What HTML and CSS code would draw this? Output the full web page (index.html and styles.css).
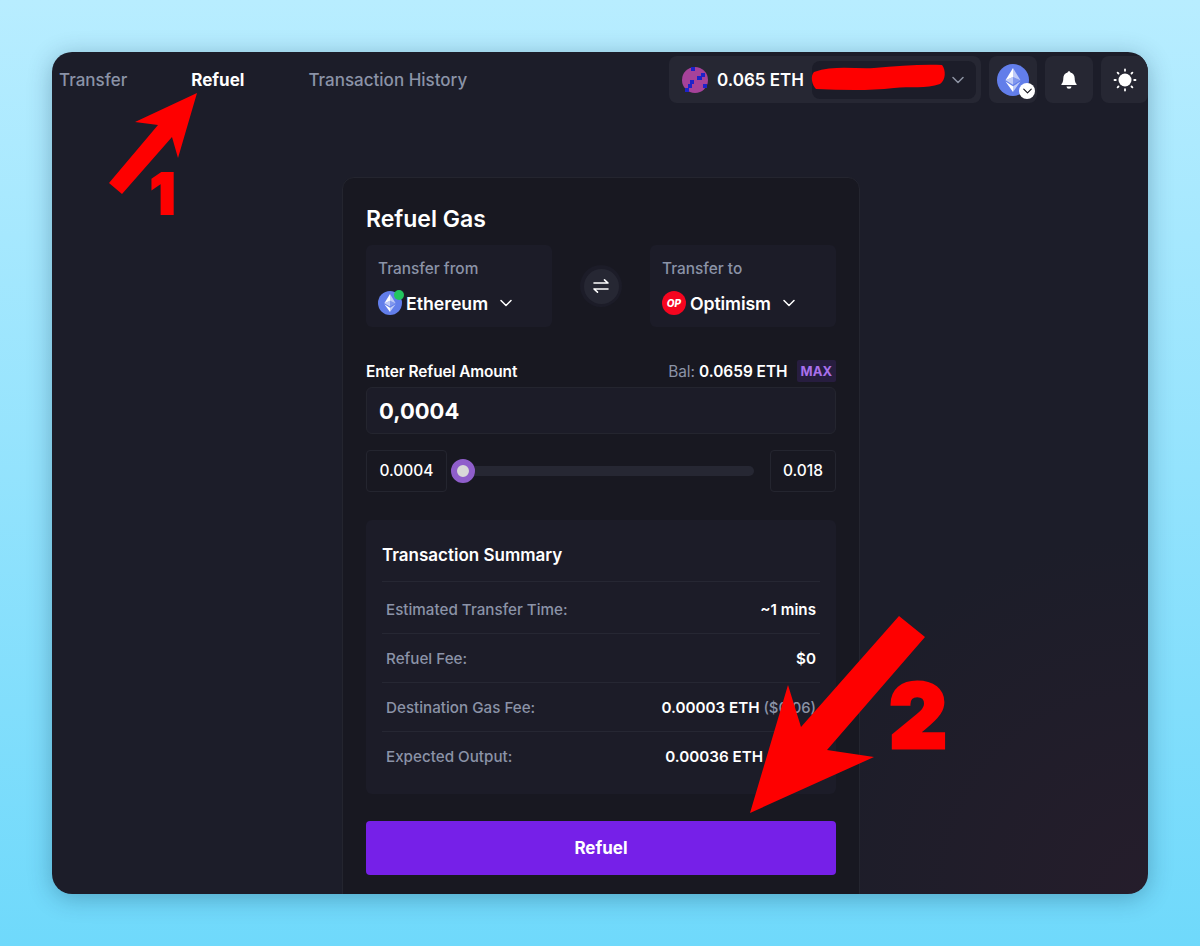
FILE: index.html
```html
<!DOCTYPE html>
<html lang="en">
<head>
    <meta charset="UTF-8">
    <meta name="viewport" content="width=device-width, initial-scale=1.0">
    <title>Refuel Gas</title>
    <link rel="stylesheet" href="styles.css">
</head>
<body>
    <svg class="defs" width="0" height="0">
        <symbol id="eth" viewBox="0 0 32 32">
            <circle cx="16" cy="16" r="16" fill="#627eea"/>
            <path d="M16 4v9l7.5 3.3z" fill="#fff" fill-opacity=".6"/>
            <path d="M16 4L8.5 16.3 16 13z" fill="#fff"/>
            <path d="M16 22.2V28l7.5-10.4z" fill="#fff" fill-opacity=".6"/>
            <path d="M16 28v-5.800L8.500 17.600z" fill="#fff"/>
            <path d="M16 20.800l7.500-4.500L16 13z" fill="#fff" fill-opacity=".2"/>
            <path d="M8.500 16.300l7.500 4.500V13z" fill="#fff" fill-opacity=".6"/>
        </symbol>
        <symbol id="chev" viewBox="0 0 12 8">
            <path d="M1 1.500l5 5 5-5" fill="none" stroke="currentColor" stroke-width="1.500" stroke-linecap="round" stroke-linejoin="round"/>
        </symbol>
    </svg>

    <div class="frame">
        <div class="topbar">
            <div class="nav">
                <a href="#">Transfer</a>
                <a href="#" class="active">Refuel</a>
                <a href="#">Transaction History</a>
            </div>
            <div class="top-right">
                <div class="wallet">
                    <svg class="avatar" width="26" height="26" viewBox="0 0 26 26">
                        <circle cx="13" cy="13" r="13" fill="#a6429a"/>
                        <path d="M9 0h4v4H9zM15 9h5v4h-5zM19 6h4v4h-4zM8 13h4v4H8zM6 17h4v4H6zM3 21h4v4H3zM21 17h4v4h-4z" fill="#1d22c9"/>
                    </svg>
                    <span class="wallet-bal">0.065 ETH</span>
                    <div class="wallet-addr">
                        <svg class="chev-sm" width="12" height="8"><use href="#chev"/></svg>
                    </div>
                </div>
                <div class="icon-btn">
                    <svg width="32" height="32"><use href="#eth"/></svg>
                    <span class="badge"><svg width="9" height="6"><use href="#chev"/></svg></span>
                </div>
                <div class="icon-btn">
                    <svg width="20" height="20" viewBox="0 0 20 20" fill="#fff">
                        <path d="M10 1.200c.8 0 1.400.6 1.400 1.300 2.700.6 4.300 2.900 4.300 5.700 0 2.600.5 4.300 1.800 5.900.3.400.1 1-.4 1H2.900c-.5 0-.7-.6-.4-1 1.300-1.600 1.800-3.300 1.800-5.900 0-2.800 1.600-5.100 4.300-5.700 0-.7.600-1.300 1.400-1.300z"/>
                        <path d="M7.500 16.500h5a2.500 2.300 0 0 1-5 0z"/>
                    </svg>
                </div>
                <div class="icon-btn last-btn">
                    <svg width="24" height="24" viewBox="0 0 24 24" fill="#fff">
                        <circle cx="12" cy="12" r="6.500"/>
                        <g stroke="#fff" stroke-width="1.800" stroke-linecap="round">
                            <path d="M12 1.500v1.300M12 21.200v1.300M1.500 12h1.300M21.200 12h1.300M4.600 4.600l.9.900M18.500 18.500l.9.900M4.600 19.400l.9-.9M18.500 5.500l.9-.9"/>
                        </g>
                    </svg>
                </div>
            </div>
        </div>

        <div class="card">
            <h1>Refuel Gas</h1>

            <div class="chains">
                <div class="chain-box">
                    <div class="chain-label">Transfer from</div>
                    <div class="chain-value">
                        <span class="chain-icon">
                            <svg width="24" height="24"><use href="#eth"/></svg>
                            <i class="online"></i>
                        </span>
                        <span>Ethereum</span>
                        <svg class="chev-white" width="12" height="8"><use href="#chev"/></svg>
                    </div>
                </div>
                <div class="swap">
                    <div class="swap-inner">
                        <svg width="18" height="16" viewBox="0 0 18 16" fill="none" stroke="#fff" stroke-width="1.600" stroke-linecap="round" stroke-linejoin="round">
                            <path d="M2 5h14M12.500 1.800L16 5M16 11H2M5.500 14.200L2 11"/>
                        </svg>
                    </div>
                </div>
                <div class="chain-box">
                    <div class="chain-label">Transfer to</div>
                    <div class="chain-value">
                        <span class="op-icon">OP</span>
                        <span class="chain-name-op">Optimism</span>
                        <svg class="chev-white" width="12" height="8"><use href="#chev"/></svg>
                    </div>
                </div>
            </div>

            <div class="amount-head">
                <span class="amount-title">Enter Refuel Amount</span>
                <span class="bal"><span class="muted">Bal:</span> <b>0.0659 ETH</b><span class="max">MAX</span></span>
            </div>
            <div class="amount-input">0,0004</div>

            <div class="slider-row">
                <div class="limit limit-min">0.0004</div>
                <div class="track"><span class="thumb"></span></div>
                <div class="limit limit-max">0.018</div>
            </div>

            <div class="summary">
                <div class="summary-title">Transaction Summary</div>
                <div class="row first"><span>Estimated Transfer Time:</span><b>~1 mins</b></div>
                <div class="row"><span>Refuel Fee:</span><b>$0</b></div>
                <div class="row"><span>Destination Gas Fee:</span><b>0.00003 ETH <em>($0.06)</em></b></div>
                <div class="row last"><span>Expected Output:</span><b>0.00036 ETH <em>($0.61)</em></b></div>
            </div>

            <button class="refuel-btn">Refuel</button>
        </div>
    </div>

    <!-- red marks painted on top of the screenshot -->
    <svg class="marks" width="1200" height="946" viewBox="0 0 1200 946" fill="#fe0000">
        <path d="M814 72c20-7 40-3 60-4 24-2 48-4 68-3 4 5 4 15-2 19-14 5-30 2-46 4-26 3-52 2-78 1-4-4-6-13-2-17z"/>
        <path d="M197 93l-19 65-6-21-50 57-13-11 49-58-23-3z"/>
        <path d="M899 616l26 21-98 113 47 7-124 56 38-128 13 42z"/>
    </svg>
    <span class="mark-num one">1</span>
    <span class="mark-num two">2</span>
</body>
</html>
```

FILE: styles.css
```css
* { margin: 0; padding: 0; box-sizing: border-box; font-family: 'Inter', 'Liberation Sans', sans-serif; }

body {
    width: 1200px;
    height: 946px;
    padding: 52px;
    overflow: hidden;
    position: relative;
    background: linear-gradient(180deg, #b8edff 0%, #6fd9fb 100%);
}

.defs { position: absolute; }

.frame {
    height: 842px;
    overflow: hidden;
    border-radius: 20px;
    background: radial-gradient(circle at 100% 100%, #251d2b 0%, #1c1d29 26%);
    box-shadow: 0 4px 24px rgba(0, 40, 70, 0.3);
    padding: 4px 0 0 0;
}

.topbar {
    display: flex;
    justify-content: space-between;
    height: 47px;
}

.nav {
    display: flex;
    align-items: center;
    gap: 64px;
    padding: 1px 0 0 7px;
}
.nav a {
    color: #8b93a7;
    text-decoration: none;
    font-size: 17px;
    font-weight: 500;
}
.nav a.active {
    color: white;
    font-weight: 700;
}

.top-right {
    display: flex;
    gap: 8px;
}

.wallet {
    width: 312px;
    display: flex;
    align-items: center;
    background: #262733;
    border-radius: 8px;
    padding: 0 5px 0 13px;
}
.avatar { flex: none; }
.wallet-bal {
    margin-left: 9px;
    color: white;
    font-size: 17px;
    font-weight: 600;
    white-space: nowrap;
}
.wallet-addr {
    margin-left: 8px;
    flex: 1;
    height: 38px;
    background: #1c1d29;
    border-radius: 8px;
    display: flex;
    align-items: center;
    justify-content: flex-end;
    padding-right: 12px;
}
.chev-sm { color: #8d93a3; }

.icon-btn {
    width: 48px;
    height: 47px;
    border-radius: 8px;
    background: #262733;
    display: flex;
    align-items: center;
    justify-content: center;
    position: relative;
}
.last-btn { width: 47px; }
.badge {
    position: absolute;
    right: 2px;
    bottom: 4px;
    width: 16px;
    height: 16px;
    border-radius: 50%;
    background: white;
    color: #14141c;
    display: flex;
    align-items: center;
    justify-content: center;
}

.card {
    width: 518px;
    margin: 74px 0 0 290px;
    padding: 24px;
    height: 730px;
    background: #181821;
    border: 1px solid #24252f;
    border-radius: 12px;
}

h1 {
    color: white;
    font-size: 23px;
    font-weight: 600;
    line-height: 32px;
    margin: 1px 0 0 -1px;
}

.chains {
    display: flex;
    align-items: center;
    justify-content: space-between;
    margin: 10px -1px 0 -1px;
}
.chain-box {
    width: 186px;
    height: 82px;
    background: #1c1c28;
    border-radius: 6px;
    padding: 15px 12px 0;
}
.chain-label {
    color: #8b93a7;
    font-size: 15.4px;
    font-weight: 500;
    line-height: 18px;
}
.chain-value {
    display: flex;
    align-items: center;
    gap: 4px;
    margin-top: 12px;
    color: white;
    font-size: 17.7px;
    font-weight: 600;
    height: 26px;
}
.chain-name-op { letter-spacing: -0.1px; }
.chev-white { margin-left: 8px; color: white; }

.chain-icon {
    position: relative;
    display: flex;
    width: 24px;
    height: 24px;
}
.online {
    position: absolute;
    top: -1px;
    right: -2px;
    width: 10px;
    height: 10px;
    border-radius: 50%;
    background: #22c55e;
}
.op-icon {
    width: 24px;
    height: 24px;
    border-radius: 50%;
    background: #f5051f;
    color: white;
    font-size: 10px;
    font-weight: 800;
    font-style: italic;
    display: flex;
    align-items: center;
    justify-content: center;
}

.swap {
    width: 42px;
    height: 42px;
    border-radius: 50%;
    background: #1c1c28;
    display: flex;
    align-items: center;
    justify-content: center;
}
.swap-inner {
    width: 35px;
    height: 35px;
    border-radius: 50%;
    background: #262733;
    display: flex;
    align-items: center;
    justify-content: center;
}

.amount-head {
    display: flex;
    justify-content: space-between;
    align-items: center;
    margin: 33px -1px 0 -1px;
    height: 22px;
}
.amount-title {
    color: white;
    font-size: 15.4px;
    font-weight: 600;
    letter-spacing: -0.1px;
}
.bal {
    display: flex;
    align-items: center;
    gap: 4px;
    font-size: 15.4px;
    color: white;
}
.bal b { font-weight: 600; }
.muted { color: #8b93a7; }
.max {
    margin-left: 5px;
    padding: 0 4px;
    line-height: 22px;
    font-size: 13px;
    font-weight: 700;
    color: #a970ec;
    background: #271d3f;
    border-radius: 2px;
}

.amount-input {
    margin: 5px -1px 0 -1px;
    height: 47px;
    line-height: 47px;
    padding-left: 12px;
    color: white;
    font-size: 22px;
    font-weight: 700;
    background: #1c1c28;
    border: 1px solid #24252f;
    border-radius: 6px;
}

.slider-row {
    display: flex;
    align-items: center;
    margin: 16px -1px 0 -1px;
}
.limit {
    height: 42px;
    line-height: 40px;
    text-align: center;
    color: white;
    font-size: 15.5px;
    font-weight: 500;
    border: 1px solid #24252f;
    border-radius: 4px;
}
.limit-min { width: 81px; }
.limit-max { width: 66px; }
.track {
    flex: 1;
    height: 10px;
    margin: 0 16px 0 4px;
    background: #262733;
    border-radius: 5px;
    position: relative;
}
.thumb {
    position: absolute;
    left: 0;
    top: -7px;
    width: 24px;
    height: 24px;
    border-radius: 50%;
    background: #d8d8d8;
    border: 6px solid #8f5ecb;
}

.summary {
    margin: 28px -1px 0 -1px;
    height: 274px;
    background: #1c1c28;
    border-radius: 6px;
    padding: 0 16px;
}
.summary-title {
    color: white;
    font-size: 17px;
    font-weight: 600;
    height: 62px;
    line-height: 70px;
    border-bottom: 1px solid #262733;
}
.row {
    display: flex;
    justify-content: space-between;
    align-items: center;
    height: 49px;
    padding: 0 4px;
    font-size: 15.2px;
    border-bottom: 1px solid #262733;
    color: #8b93a7;
}
.row span { font-weight: 500; }
.row.first {
    height: 52px;
    padding-top: 4px;
}
.row.last { border-bottom: none; }
.row b {
    color: white;
    font-weight: 600;
}
.row em {
    font-style: normal;
    font-weight: 500;
    font-size: 14.8px;
    color: #8b93a7;
}

.refuel-btn {
    display: block;
    width: 470px;
    height: 54px;
    margin: 27px -1px 0 -1px;
    background: #7620e8;
    color: white;
    border: none;
    border-radius: 4px;
    font-size: 17px;
    font-weight: 700;
    cursor: pointer;
}

.marks {
    position: absolute;
    left: 0;
    top: 0;
    pointer-events: none;
}
.mark-num {
    position: absolute;
    color: #fe0000;
    font-weight: 900;
    line-height: 1;
    -webkit-text-stroke: 2px #fe0000;
}
.mark-num.one {
    left: 150px;
    top: 166px;
    font-size: 56px;
}
.mark-num.two {
    left: 889px;
    top: 671px;
    font-size: 90px;
    -webkit-text-stroke: 3px #fe0000;
}
```
